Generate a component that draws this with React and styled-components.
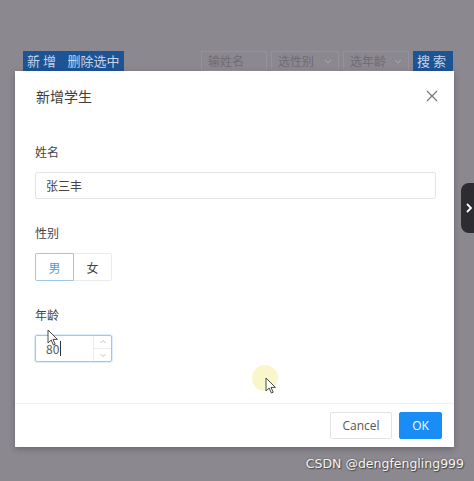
import React, { useState } from "react";
import styled, { createGlobalStyle } from "styled-components";

const GlobalStyle = createGlobalStyle`
  html, body {
    margin: 0;
    padding: 0;
    background: #8c8890;
    font-family: "Noto Sans CJK SC", "Noto Sans", sans-serif;
  }
  * { box-sizing: border-box; }
`;

const Page = styled.div`
  position: relative;
  width: 474px;
  height: 481px;
  overflow: hidden;
  background: #8c8890;
`;

const Toolbar = styled.div`
  display: flex;
  align-items: flex-start;
  padding: 51px 21px 0 23px;
  height: 71px;
`;

const ToolGroup = styled.div`
  display: flex;
  gap: ${(p) => p.$gap || 0}px;
`;

const Spacer = styled.div`
  flex: 1;
`;

const DimButton = styled.div`
  height: 20px;
  width: ${(p) => p.$w}px;
  background: #1d5495;
  color: #c6d3e6;
  font-size: 13px;
  line-height: 20px;
  text-align: center;
  letter-spacing: ${(p) => (p.$spaced ? "3px" : "0")};
`;

const DimField = styled.div`
  height: 20px;
  width: ${(p) => p.$w}px;
  border: 1px solid #96929c;
  color: #6e6b73;
  font-size: 12px;
  line-height: 18px;
  padding: 0 6px;
  display: flex;
  align-items: center;
  justify-content: space-between;
`;

const Overlay = styled.div`
  position: absolute;
  left: 15px;
  top: 71px;
  width: 439px;
  height: 376px;
  background: #fff;
  box-shadow: 0 2px 6px rgba(40, 36, 44, 0.35);
  display: flex;
  flex-direction: column;
`;

const Header = styled.div`
  display: flex;
  justify-content: space-between;
  align-items: center;
  height: 50px;
  padding: 0 14px 0 21px;
`;

const Title = styled.div`
  font-size: 14px;
  color: #3c3c3c;
  line-height: 22px;
`;

const Close = styled.button`
  border: 0;
  background: none;
  padding: 0;
  width: 16px;
  height: 16px;
  display: flex;
  align-items: center;
  justify-content: center;
  cursor: pointer;
`;

const Body = styled.div`
  flex: 1;
  padding: 21px 18px 0 20px;
  display: flex;
  flex-direction: column;
`;

const Field = styled.div`
  display: flex;
  flex-direction: column;
  gap: 10px;
  margin-bottom: 24px;
`;

const Label = styled.div`
  font-size: 12px;
  line-height: 20px;
  color: #444;
`;

const TextInput = styled.div`
  height: 27px;
  border: 1px solid #e4e4e4;
  border-radius: 2px;
  font-size: 12px;
  color: #444;
  padding-left: 10px;
  display: flex;
  align-items: center;
`;

const RadioGroup = styled.div`
  display: flex;
`;

const RadioButton = styled.div`
  width: ${(p) => p.$w}px;
  height: 28px;
  border: 1px solid ${(p) => (p.$active ? "#9cc8ec" : "#ebebeb")};
  ${(p) => (p.$first ? "border-radius: 2px 0 0 2px;" : "border-left: 0; border-radius: 0 2px 2px 0;")}
  color: ${(p) => (p.$active ? "#4d9bdc" : "#444")};
  font-size: 12px;
  display: flex;
  align-items: center;
  justify-content: center;
`;

const NumberBox = styled.div`
  width: 77px;
  height: 27px;
  border: 1px solid #9cc8ec;
  border-radius: 2px;
  box-shadow: 0 0 0 1px rgba(160, 205, 240, 0.35);
  display: flex;
`;

const NumberValue = styled.div`
  flex: 1;
  font-size: 12px;
  color: #555;
  padding-left: 10px;
  display: flex;
  align-items: center;
`;

const Caret = styled.span`
  display: inline-block;
  width: 1px;
  height: 15px;
  background: #333;
  margin-left: 1px;
`;

const Handles = styled.div`
  width: 18px;
  border-left: 1px solid #ececec;
  display: flex;
  flex-direction: column;
`;

const Handle = styled.div`
  flex: 1;
  display: flex;
  align-items: center;
  justify-content: center;
  ${(p) => (p.$top ? "border-bottom: 1px solid #ececec;" : "")}
`;

const Footer = styled.div`
  border-top: 1px solid #f0f0f0;
  height: 44px;
  padding: 0 12px;
  display: flex;
  justify-content: flex-end;
  align-items: center;
  gap: 7px;
`;

const Button = styled.button`
  height: 27px;
  width: ${(p) => p.$w}px;
  padding: 0;
  border-radius: 2px;
  border: 1px solid ${(p) => (p.$primary ? "#1a8cf5" : "#e3e3e3")};
  background: ${(p) => (p.$primary ? "#1a8cf5" : "#fff")};
  color: ${(p) => (p.$primary ? "#fff" : "#555")};
  font-family: "Open Sans", "Noto Sans", sans-serif;
  font-size: 12px;
  cursor: pointer;
`;

const SideTab = styled.div`
  position: absolute;
  left: 461px;
  top: 183px;
  width: 20px;
  height: 50px;
  border-radius: 8px 0 0 8px;
  background: #2d2c31;
  display: flex;
  align-items: center;
  padding-left: 4px;
`;

const Watermark = styled.div`
  position: absolute;
  right: 10px;
  top: 456px;
  font-family: "DejaVu Sans", sans-serif;
  font-size: 12.5px;
  color: #f4f4f4;
  text-shadow: 0 0 2px #555, 1px 1px 1px #444;
`;

const CursorLayer = styled.svg`
  position: absolute;
  left: ${(p) => p.$x}px;
  top: ${(p) => p.$y}px;
  overflow: visible;
  pointer-events: none;
`;

const Chevron = ({ d, stroke = "#aaa", size = 8 }) => (
  <svg width={size} height={size} viewBox="0 0 8 8">
    <path d={d} fill="none" stroke={stroke} strokeWidth="1" />
  </svg>
);

function Pointer() {
  return (
    <path
      d="M0 0 L0 13 L3.2 10 L5.4 15 L7.2 14.2 L5 9.4 L9.4 9.4 Z"
      fill="#fff"
      stroke="#333"
      strokeWidth="0.9"
      strokeLinejoin="round"
    />
  );
}

export default function App() {
  const [gender, setGender] = useState("男");

  return (
    <Page>
      <GlobalStyle />
      <Toolbar>
        <ToolGroup>
          <DimButton $w={40} $spaced>新增</DimButton>
          <DimButton $w={61}>删除选中</DimButton>
        </ToolGroup>
        <Spacer />
        <ToolGroup $gap={4}>
          <DimField $w={66}>输姓名</DimField>
          <DimField $w={68}>
            选性别 <Chevron d="M1 3 L4 6 L7 3" stroke="#aaa6b0" />
          </DimField>
          <DimField $w={66}>
            选年龄 <Chevron d="M1 3 L4 6 L7 3" stroke="#aaa6b0" />
          </DimField>
          <DimButton $w={40} $spaced>搜索</DimButton>
        </ToolGroup>
      </Toolbar>

      <Overlay>
        <Header>
          <Title>新增学生</Title>
          <Close aria-label="close">
            <svg width="12" height="12" viewBox="0 0 12 12">
              <path d="M1 1 L11 11 M11 1 L1 11" stroke="#777" strokeWidth="1.2" />
            </svg>
          </Close>
        </Header>
        <Body>
          <Field>
            <Label>姓名</Label>
            <TextInput>张三丰</TextInput>
          </Field>
          <Field>
            <Label>性别</Label>
            <RadioGroup>
              {["男", "女"].map((g, i) => (
                <RadioButton
                  key={g}
                  $w={i === 0 ? 39 : 38}
                  $first={i === 0}
                  $active={gender === g}
                  onClick={() => setGender(g)}
                >
                  {g}
                </RadioButton>
              ))}
            </RadioGroup>
          </Field>
          <Field>
            <Label>年龄</Label>
            <NumberBox>
              <NumberValue>
                80
                <Caret />
              </NumberValue>
              <Handles>
                <Handle $top>
                  <Chevron d="M1.5 5 L4 2.5 L6.5 5" stroke="#c4c4c4" size={8} />
                </Handle>
                <Handle>
                  <Chevron d="M1.5 3 L4 5.5 L6.5 3" stroke="#c4c4c4" size={8} />
                </Handle>
              </Handles>
            </NumberBox>
          </Field>
        </Body>
        <Footer>
          <Button $w={62}>Cancel</Button>
          <Button $w={43} $primary>
            OK
          </Button>
        </Footer>
      </Overlay>

      <SideTab>
        <svg width="8" height="10" viewBox="0 0 8 10">
          <path d="M2 1 L6 5 L2 9" fill="none" stroke="#fff" strokeWidth="1.8" />
        </svg>
      </SideTab>

      <CursorLayer $x={48} $y={330} width="12" height="16">
        <Pointer />
      </CursorLayer>
      <CursorLayer $x={252} $y={366} width="30" height="30">
        <circle cx="13" cy="12" r="13" fill="#f6f0a8" opacity="0.6" />
        <g transform="translate(14 12)">
          <Pointer />
        </g>
      </CursorLayer>

      <Watermark>CSDN @dengfengling999</Watermark>
    </Page>
  );
}
